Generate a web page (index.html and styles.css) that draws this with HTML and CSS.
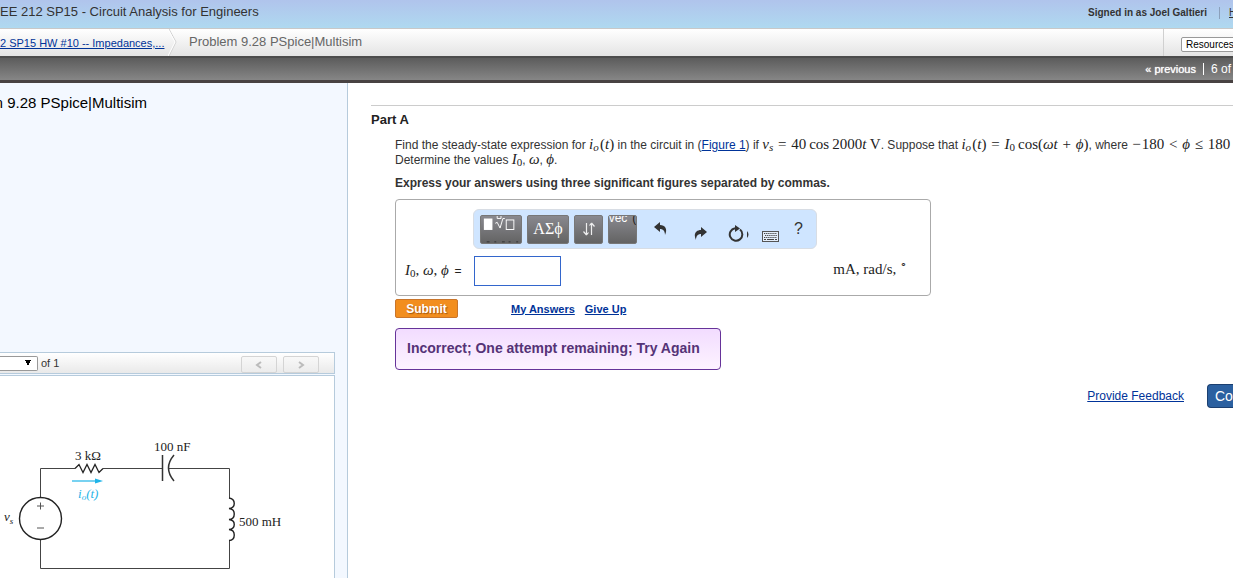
FILE: index.html
```html
<!DOCTYPE html>
<html lang="en">
<head>
    <meta charset="UTF-8">
    <meta name="viewport" content="width=device-width, initial-scale=1.0">
    <title>Problem 9.28 PSpice|Multisim</title>
    <link rel="stylesheet" href="styles.css">
</head>
<body>
    <!-- Course header -->
    <header class="course-bar">
        <span class="course-title">EE 212 SP15 - Circuit Analysis for Engineers</span>
        <div class="account">
            <span class="signed-in">Signed in as Joel Galtieri</span>
            <a class="edge-link" href="#">H</a>
        </div>
    </header>

    <!-- Breadcrumbs -->
    <nav class="crumb-bar">
        <a class="crumb-link" href="#">2 SP15 HW #10 -- Impedances,...</a>
        <svg class="crumb-arrow" width="10" height="27" viewBox="0 0 10 27">
            <path d="M1 0 L8 13 L1 27" fill="none" stroke="#cfcfcf"/>
            <path d="M0 0 L7 13 L0 27" fill="none" stroke="#fff"/>
        </svg>
        <span class="crumb-current">Problem 9.28 PSpice|Multisim</span>
        <div class="resources">
            <button class="resources-btn">Resources</button>
        </div>
    </nav>

    <!-- Item navigation -->
    <div class="item-bar">
        <a class="previous" href="#">« previous</a>
        <span class="item-count">6 of</span>
    </div>

    <main class="page">
        <aside class="sidebar">
            <h1 class="problem-title"><span>m 9.28 PSpice|Multisim</span></h1>
            <div class="figure-bar">
                <select class="figure-select" id="figure" aria-label="Figure"><option></option></select>
                <label class="figure-total" for="figure">of 1</label>
                <div class="figure-nav">
                    <button class="figure-btn" aria-label="Previous figure">
                        <svg width="8" height="8" viewBox="0 0 8 8"><path d="M6 1 L2 4 L6 7" fill="none" stroke="#bbb" stroke-width="2"/></svg>
                    </button>
                    <button class="figure-btn" aria-label="Next figure">
                        <svg width="8" height="8" viewBox="0 0 8 8"><path d="M2 1 L6 4 L2 7" fill="none" stroke="#bbb" stroke-width="2"/></svg>
                    </button>
                </div>
            </div>
            <div class="figure">
                <svg class="circuit" width="300" height="148" viewBox="0 0 300 148">
                    <g fill="none" stroke="#444">
                        <path d="M40.500 67 V38.500 H75 M103 38.500 H162"/>
                        <path d="M169 38.500 H229.500 V68 M229.500 110 V138.500 H40.500 V109"/>
                        <path d="M162.500 25 V51 M174 25 Q163 38 174 51" stroke="#333" stroke-width="1.500"/>
                        <path d="M229 68 C236 69 236 78 229 78.500 C236 79 236 89 229 89.500 C236 90 236 99 229 99.500 C236 100 236 110 229 110.500" stroke="#222" stroke-width="1.400"/>
                        <path d="M75 38.500 l4 -4 l4 8 l4 -8 l4 8 l4 -8 l4 8 l4 -4" stroke="#222" stroke-width="1.300"/>
                        <circle cx="40.500" cy="88.500" r="21" fill="#fff" stroke="#222" stroke-width="1.400"/>
                        <path d="M37 76 H44 M40.500 72.500 V79.500 M37 98 H44" stroke="#555"/>
                    </g>
                    <path d="M72 51 H96" stroke="#1fb4e8" stroke-width="1.200"/>
                    <path d="M95 48.500 L103 51 L95 53.500 Z" fill="#1fb4e8"/>
                    <g class="circuit-text">
                        <text x="75" y="30">3 kΩ</text>
                        <text x="154" y="21">100 nF</text>
                        <text x="239" y="96">500 mH</text>
                        <text class="italic" x="4" y="91">v<tspan class="small" dy="3">s</tspan></text>
                        <text class="current italic" x="78" y="68">i<tspan class="small" dy="2">o</tspan><tspan dy="-2">(t)</tspan></text>
                    </g>
                </svg>
            </div>
        </aside>

        <section class="part">
            <h2 class="part-title">Part A</h2>
            <div class="part-body">
                <p class="question">Find the steady-state expression for <span class="math"><i>i<sub>o</sub></i>&hairsp;(<i>t</i>)</span> in the circuit in (<a href="#">Figure 1</a>) if <span class="math"><i>v<sub>s</sub></i> <span class="op">=</span> 40&thinsp;cos&thinsp;2000<i>t</i> V</span>. Suppose that <span class="math"><i>i<sub>o</sub></i>&hairsp;(<i>t</i>) <span class="op">=</span> <i>I</i><sub>0</sub>&thinsp;cos(<i>ωt</i> <span class="op">+</span> <i>ϕ</i>)</span>, where <span class="math"><span class="op">−</span>180 <span class="op">&lt;</span> <i>ϕ</i> <span class="op">≤</span> 180</span><br>Determine the values <span class="math"><i>I</i><sub>0</sub></span>, <span class="math"><i>ω</i></span>, <span class="math"><i>ϕ</i></span>.</p>
                <p class="instructions">Express your answers using three significant figures separated by commas.</p>

                <form class="answer-box">
                    <div class="toolbar">
                        <button type="button" class="tool wide" aria-label="Templates">
                            <svg width="42" height="28" viewBox="0 0 42 28">
                                <rect x="3" y="3" width="9" height="12" fill="#fff"/>
                                <path d="M15 8 l2 -1 l3 6 l3 -10 h2 M17 0 v3 h4 v-3" fill="none" stroke="#fff"/>
                                <rect x="26.500" y="4.500" width="8" height="10" fill="none" stroke="#fff"/>
                                <path d="M6 27.500 h3 M14 27.500 h2 M22 27.500 h3 M29 27.500 h2 M37 27.500 h2" stroke="#333"/>
                            </svg>
                        </button>
                        <button type="button" class="tool wide greek">ΑΣϕ</button>
                        <button type="button" class="tool" aria-label="Arrows">
                            <svg width="14" height="16" viewBox="0 0 14 16"><path d="M4.500 2 V14 M1.500 10.500 L4.500 14 M9.500 14 V2 M12.500 5.500 L9.500 2 M4.500 14 L6.500 11.500 M9.500 2 L7.500 4.500" fill="none" stroke="#eee" stroke-width="1.200"/></svg>
                        </button>
                        <button type="button" class="tool vec"><span>vec</span><span class="paren">(</span></button>
                        <button type="button" class="icon-btn undo" aria-label="Undo">
                            <svg width="14" height="14" viewBox="0 0 14 14"><path d="M0 5 L6 0 V3 C11 3 14 7 11 13 C11 9 9 7 6 7 V10 Z" fill="#333"/></svg>
                        </button>
                        <button type="button" class="icon-btn lower redo" aria-label="Redo">
                            <svg width="14" height="14" viewBox="0 0 14 14"><path d="M13 5 L7 0 V3 C2 3 -1 7 2 13 C2 9 4 7 7 7 V10 Z" fill="#333"/></svg>
                        </button>
                        <button type="button" class="icon-btn lower reset" aria-label="Reset">
                            <svg width="22" height="18" viewBox="0 0 22 18"><path d="M12 4.500 A6.300 6.300 0 1 1 7 3.200" fill="none" stroke="#333" stroke-width="2"/><path d="M7 0 L12 3.500 L7 7 Z" fill="#333"/><path d="M19 6 Q22 9.500 19 13 Z" fill="#333"/></svg>
                        </button>
                        <button type="button" class="icon-btn lower keys" aria-label="Keyboard">
                            <svg width="17" height="11" viewBox="0 0 17 11"><rect x=".5" y=".5" width="16" height="10" fill="#e4eefa" stroke="#555"/><path d="M2 2.500 H15 M3 4.500 H15 M2 6.500 H15" stroke="#444" stroke-dasharray="1.300 .8"/><path d="M2 8.500 h2 M5 8.500 h7 M13 8.500 h2" stroke="#444"/></svg>
                        </button>
                        <button type="button" class="icon-btn help">?</button>
                    </div>
                    <div class="answer-row">
                        <label class="math answer-label" for="answer"><i>I</i><sub>0</sub>, <i>ω</i>, <i>ϕ</i> <span class="equals">=</span></label>
                        <input class="answer-input" id="answer" type="text">
                        <span class="math units">mA, rad/s, <sup>∘</sup></span>
                    </div>
                </form>

                <div class="actions">
                    <button class="submit-btn">Submit</button>
                    <a href="#">My Answers</a>
                    <a href="#">Give Up</a>
                </div>
                <div class="feedback">Incorrect; One attempt remaining; Try Again</div>
            </div>
            <div class="page-footer">
                <a href="#">Provide Feedback</a>
                <button class="continue-btn">Co</button>
            </div>
        </section>
    </main>
</body>
</html>
```
FILE: styles.css
```css
/* Base */
* {
    box-sizing: border-box;
}

body {
    margin: 0;
    min-height: 100vh;
    display: flex;
    flex-direction: column;
    overflow: hidden;
    background: #fff;
    color: #333;
    font-family: "Liberation Sans", Arial, sans-serif;
    font-size: 12px;
}

a {
    color: #039;
}

button {
    font-family: inherit;
    padding: 0;
    cursor: pointer;
}

/* Course header */
.course-bar {
    display: flex;
    justify-content: space-between;
    height: 29px;
    padding-top: 4px;
    line-height: 16px;
    background: linear-gradient(#b0c4ec, #afd9f0);
    border-bottom: 1px solid #c8c8c8;
}

.course-title {
    font-size: 13px;
}

.account {
    display: flex;
    align-items: center;
    height: 18px;
    font-size: 10px;
}

.signed-in {
    padding-right: 12px;
    border-right: 1px solid #8ba0bb;
    line-height: 12px;
    font-weight: bold;
}

.edge-link {
    width: 4px;
    margin-left: 9px;
    color: #333;
}

/* Breadcrumbs */
.crumb-bar {
    display: flex;
    align-items: center;
    height: 27px;
    background: linear-gradient(#fff, #e4e4e4);
}

.crumb-link {
    width: 168px;
    font-size: 11px;
    white-space: nowrap;
}

.crumb-current {
    margin-left: 11px;
    padding-bottom: 2px;
    font-size: 13px;
    color: #666;
}

.resources {
    display: flex;
    align-items: center;
    width: 70px;
    height: 27px;
    margin-left: auto;
    padding: 4px 0 0 17px;
    border-left: 1px solid #d0d0d0;
}

.resources-btn {
    flex: none;
    width: 80px;
    height: 15px;
    padding-left: 4px;
    border: 1px solid #999;
    border-radius: 2px;
    background: #fff;
    color: #000;
    font-size: 10px;
    line-height: 13px;
    text-align: left;
}

/* Item navigation */
.item-bar {
    display: flex;
    justify-content: flex-end;
    align-items: center;
    height: 27px;
    background: linear-gradient(#5c5c5c, #868686);
    border-top: 2px solid #4c4c4c;
    border-bottom: 3px solid #484242;
    color: #fff;
}

.previous {
    padding-right: 7px;
    border-right: 1px solid #fff;
    color: #fff;
    font-size: 11px;
    line-height: 12px;
    text-decoration: none;
    text-shadow: 0 0 1px #fff;
}

.item-count {
    width: 29px;
    padding-left: 7px;
    white-space: nowrap;
}

/* Columns */
.page {
    display: flex;
    flex: 1;
}

/* Sidebar with the figure */
.sidebar {
    display: flex;
    flex-direction: column;
    flex: none;
    width: 348px;
    padding-right: 12px;
    background: #f3f8ff;
    border-right: 1px solid #b6cbdc;
}

.problem-title {
    display: flex;
    justify-content: flex-end;
    width: 147px;
    height: 269px;
    margin: 0;
    padding-top: 11px;
    color: #000;
    font-size: 15px;
    font-weight: normal;
    line-height: 18px;
    white-space: nowrap;
}

.figure-bar {
    display: flex;
    align-items: center;
    height: 22px;
    padding-right: 15px;
    background: linear-gradient(#fff, #e9e9e9);
    border: 1px solid #b6cbdc;
    border-left: 0;
}

.figure-select {
    width: 38px;
    height: 15px;
    appearance: none;
    border: 1px solid #999;
    border-left: 0;
    border-radius: 0 2px 2px 0;
    background: #fff conic-gradient(from -27deg at 50% 100%, #000 54deg, transparent 0) 25px 3px / 6px 6px no-repeat;
}

.figure-total {
    margin-left: 3px;
    font-size: 11px;
}

.figure-nav {
    display: flex;
    gap: 6px;
    margin-left: auto;
    padding-top: 3px;
}

.figure-btn {
    display: flex;
    align-items: center;
    justify-content: center;
    width: 36px;
    height: 17px;
    border: 1px solid #d4d4d4;
    border-radius: 2px;
    background: linear-gradient(#f8f8f8, #ececec);
}

.figure {
    flex: 1;
    margin-top: 1px;
    padding-top: 54px;
    background: #fff;
    border: 1px solid #b6cbdc;
    border-width: 1px 1px 0 0;
}

.circuit {
    display: block;
}

.circuit-text {
    font-family: "Liberation Serif", "Times New Roman", serif;
    font-size: 13px;
    fill: #222;
}

.circuit-text .italic {
    font-style: italic;
}

.circuit-text .small {
    font-size: 9px;
}

.circuit-text .current {
    fill: #1fb4e8;
}

/* Part A */
.part {
    flex: 1;
    min-width: 0;
    margin: 22px 0 0 23px;
    border-top: 1px solid #ccc;
}

.part-title {
    margin: 5px 0 9px;
    font-size: 13px;
    line-height: 18px;
    color: #222;
}

.part-body {
    padding-left: 24px;
}

.question {
    margin: 0;
    line-height: 15px;
    white-space: nowrap;
}

.instructions {
    margin: 8px 0;
    font-weight: bold;
    line-height: 15px;
}

.math {
    font-family: "Liberation Serif", "Times New Roman", serif;
    font-size: 15px;
    line-height: 0;
    color: #222;
}

.math sub,
.math sup {
    font-size: 11px;
}

.math sub {
    vertical-align: -2px;
}

.op {
    padding: 0 1px;
}

/* Answer box */
.answer-box {
    width: 536px;
    height: 97px;
    padding-top: 9px;
    border: 1px solid #aaa;
    border-radius: 4px;
}

.toolbar {
    display: flex;
    align-items: center;
    gap: 5px;
    width: 344px;
    height: 40px;
    margin-left: 77px;
    padding-left: 6px;
    border: 1px solid #d8dde4;
    border-radius: 6px;
    background: #cfe5ff;
}

.tool {
    display: flex;
    align-items: center;
    justify-content: center;
    flex: none;
    width: 29px;
    height: 29px;
    overflow: hidden;
    border: 1px solid #777;
    border-radius: 2px;
    background: linear-gradient(#89898f, #636363);
    color: #fff;
    font-size: 12px;
}

.wide {
    width: 42px;
}

.greek {
    font-family: "Liberation Serif", "Times New Roman", serif;
    font-size: 16px;
}

.vec {
    align-items: flex-start;
    gap: 5px;
    line-height: 4px;
}

.paren {
    color: #222;
}

.icon-btn {
    display: flex;
    align-items: center;
    border: 0;
    background: none;
    color: #333;
}

.lower {
    padding-top: 10px;
}

.undo {
    margin-left: 12px;
}

.redo {
    margin-left: 21px;
}

.reset {
    margin-left: 15px;
}

.keys {
    margin-left: 7px;
    padding-top: 14px;
}

.help {
    margin-left: 10px;
    font-size: 16px;
}

.answer-row {
    display: flex;
    align-items: center;
    padding: 7px 23px 0 9px;
}

.answer-label {
    width: 69px;
}

.equals {
    padding-left: 2px;
    font-family: "Liberation Sans", Arial, sans-serif;
    font-size: 12px;
}

.answer-input {
    width: 87px;
    height: 30px;
    border: 1px solid #36c;
}

.units {
    margin-left: auto;
    padding-bottom: 5px;
    line-height: 16px;
}

.units sup {
    line-height: 0;
}

/* Actions under the box */
.actions {
    display: flex;
    align-items: center;
    gap: 10px;
    margin-top: 3px;
    font-size: 11px;
    font-weight: bold;
}

.submit-btn {
    width: 63px;
    height: 19px;
    margin-right: 43px;
    border: 1px solid #c9752b;
    border-radius: 2px;
    background: #f28e1e;
    color: #fff;
    font-size: 12px;
    font-weight: bold;
    text-shadow: 1px 1px 1px #a55a10;
}

.feedback {
    width: 326px;
    margin-top: 10px;
    padding: 9px 11px 11px;
    border: 1px solid #639;
    border-radius: 4px;
    background: linear-gradient(#f2dcff, #fdf3ff);
    color: #537;
    font-size: 14px;
    font-weight: bold;
    line-height: 20px;
    white-space: nowrap;
}

/* Footer */
.page-footer {
    display: flex;
    align-items: center;
    justify-content: flex-end;
    gap: 23px;
    margin-top: 14px;
}

.continue-btn {
    width: 26px;
    height: 24px;
    padding-left: 7px;
    border: 1px solid #1b3f70;
    border-right: 0;
    border-radius: 4px 0 0 4px;
    background: #2b60a0;
    color: #fff;
    font-size: 14px;
    text-align: left;
    white-space: nowrap;
}
```
